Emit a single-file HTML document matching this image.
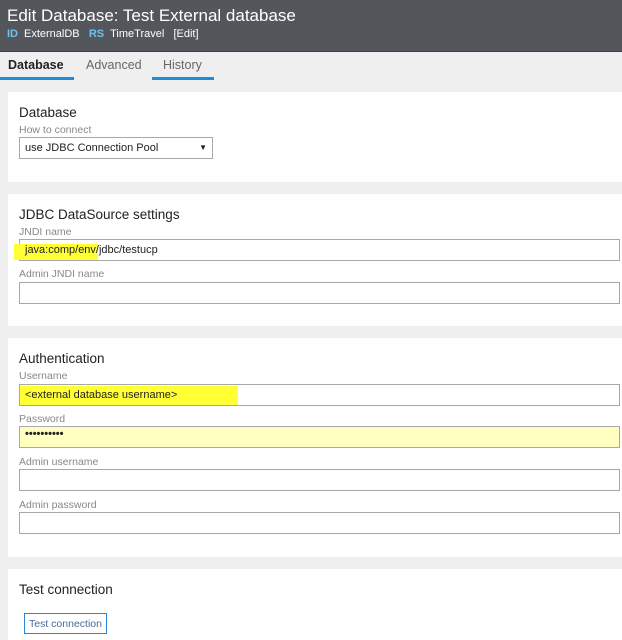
<!DOCTYPE html>
<html><head><style>
*{margin:0;padding:0;box-sizing:border-box}
body{width:622px;height:640px;overflow:hidden;background:#efefef;font-family:"Liberation Sans",sans-serif;position:relative}
.hd{position:absolute;left:0;top:0;width:622px;height:52px;background:#53575c;border-bottom:1px solid #3e4145}
.t{position:absolute;left:7px;top:6px;color:#fff;font-size:17px}
.sub{position:absolute;left:7px;top:28px;color:#fff;font-size:11px}
.sub b{color:#6cc3f0;margin-right:6px}
.tab{position:absolute;top:58px;font-size:12.5px;color:#666}
.ul{position:absolute;top:77px;height:3px;background:#1a8ed6}
.p{position:absolute;left:8px;width:614px;background:#fff}
.h{position:absolute;left:19px;font-size:13.5px;color:#222}
.l{position:absolute;left:19px;font-size:10.5px;color:#888}
.in{position:absolute;left:19px;width:601px;height:22px;border:1px solid #a8a8a8;background:#fff;font-size:11px;padding:4px 5px;color:#222}
.hl{position:absolute;background:#ffff33}
</style></head><body>
<div class="hd"><div class="t">Edit Database: Test External database</div>
<div class="sub"><b>ID</b>ExternalDB &nbsp;&nbsp;<b>RS</b>TimeTravel &nbsp;&nbsp;[Edit]</div></div>
<div class="tab" style="left:8px;color:#222;font-weight:bold">Database</div>
<div class="tab" style="left:86px">Advanced</div>
<div class="tab" style="left:163px">History</div>
<div class="ul" style="left:0;width:74px"></div>
<div class="ul" style="left:152px;width:62px"></div>

<div class="p" style="top:92px;height:90px"></div>
<div class="h" style="top:105px">Database</div>
<div class="l" style="top:124px">How to connect</div>
<div class="in" style="top:137px;width:194px">use JDBC Connection Pool<span style="position:absolute;right:5px;font-size:8px;top:5px">▼</span></div>

<div class="p" style="top:194px;height:132px"></div>
<div class="h" style="top:207px">JDBC DataSource settings</div>
<div class="l" style="top:226px">JNDI name</div>
<div class="in" style="top:239px"></div>
<div class="hl" style="left:14px;top:244px;width:84px;height:16px"></div>
<div class="in" style="top:239px;background:transparent;border-color:transparent">java:comp/env/jdbc/testucp</div>
<div class="l" style="top:268px">Admin JNDI name</div>
<div class="in" style="top:282px"></div>

<div class="p" style="top:338px;height:219px"></div>
<div class="h" style="top:351px">Authentication</div>
<div class="l" style="top:370px">Username</div>
<div class="in" style="top:384px"></div>
<div class="hl" style="left:20px;top:386px;width:218px;height:19px"></div>
<div class="in" style="top:384px;background:transparent;border-color:transparent">&lt;external database username&gt;</div>
<div class="l" style="top:413px">Password</div>
<div class="in" style="top:426px;background:#ffffc0;font-weight:bold;padding-top:1px">••••••••••</div>
<div class="l" style="top:456px">Admin username</div>
<div class="in" style="top:469px"></div>
<div class="l" style="top:499px">Admin password</div>
<div class="in" style="top:512px"></div>

<div class="p" style="top:569px;height:71px"></div>
<div class="h" style="top:582px">Test connection</div>
<div style="position:absolute;left:24px;top:613px;width:83px;height:21px;border:1px solid #2a86d0;color:#4a6a9a;font-size:10.5px;padding:4px 0 0 4px">Test connection</div>
</body></html>
